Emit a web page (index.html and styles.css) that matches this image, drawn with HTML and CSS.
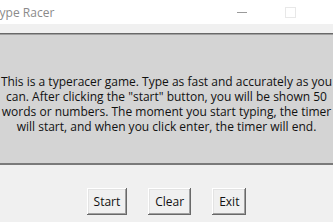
FILE: index.html
```html
<!DOCTYPE html>
<html>
<head>
<meta charset="utf-8">
<link rel="stylesheet" href="styles.css">
</head>
<body>
<div class="window">
  <div class="titlebar">
    <span class="title">Type Racer</span>
    <div class="controls">
      <span class="min"></span>
      <span class="max"></span>
    </div>
  </div>
  <div class="client">
    <div class="panel">
      <p class="intro">This is a typeracer game. Type as fast and accurately as you can. After clicking the "start" button, you will be shown 50 words or numbers. The moment you start typing, the timer will start, and when you click enter, the timer will end.</p>
    </div>
    <div class="buttons">
      <button class="btn">Start</button>
      <button class="btn">Clear</button>
      <button class="btn">Exit</button>
    </div>
  </div>
</div>
</body>
</html>
```
FILE: styles.css
```css
html, body {
  margin: 0;
  padding: 0;
  width: 333px;
  height: 222px;
  overflow: hidden;
  background: #f0f0f0;
  font-family: "Open Sans", "Noto Sans", sans-serif;
}
.window {
  width: 333px;
  height: 222px;
  display: flex;
  flex-direction: column;
}
.titlebar {
  height: 24px;
  background: #ffffff;
  display: flex;
  align-items: center;
  justify-content: space-between;
  flex-shrink: 0;
}
.title {
  font-size: 12px;
  color: #8a8a8a;
  margin-left: -7px;
}
.controls {
  display: flex;
  align-items: center;
  gap: 38px;
  margin-right: 37px;
}
.min {
  width: 10px;
  height: 1px;
  background: #9a9a9a;
}
.max {
  width: 9px;
  height: 9px;
  border: 1px solid #e8e8e8;
}
.client {
  flex: 1;
  display: flex;
  flex-direction: column;
  padding-top: 9px;
}
.panel {
  height: 132px;
  flex-shrink: 0;
  background: #d4d4d4;
  border-top: 1px solid #696969;
  box-shadow: inset 0 1px 0 #a0a0a0;
  border-bottom: 2px solid #7a7a7a;
  display: flex;
  align-items: center;
  justify-content: center;
  box-sizing: border-box;
  padding-top: 10px;
}
.intro {
  margin: 0;
  font-size: 12px;
  line-height: 15px;
  text-align: center;
  color: #111;
  width: 333px;
}
.buttons {
  display: flex;
  justify-content: center;
  gap: 21px;
  padding-top: 23px;
}
.btn {
  font-family: inherit;
  font-size: 12px;
  color: #111;
  background: #f0f0f0;
  border: none;
  box-shadow: inset -1px -1px 0 #696969, inset 1px 1px 0 #ffffff, inset -2px -2px 0 #a0a0a0, inset 2px 2px 0 #e3e3e3;
  height: 27px;
  padding: 0 7px;
  margin: 0;
}
```
